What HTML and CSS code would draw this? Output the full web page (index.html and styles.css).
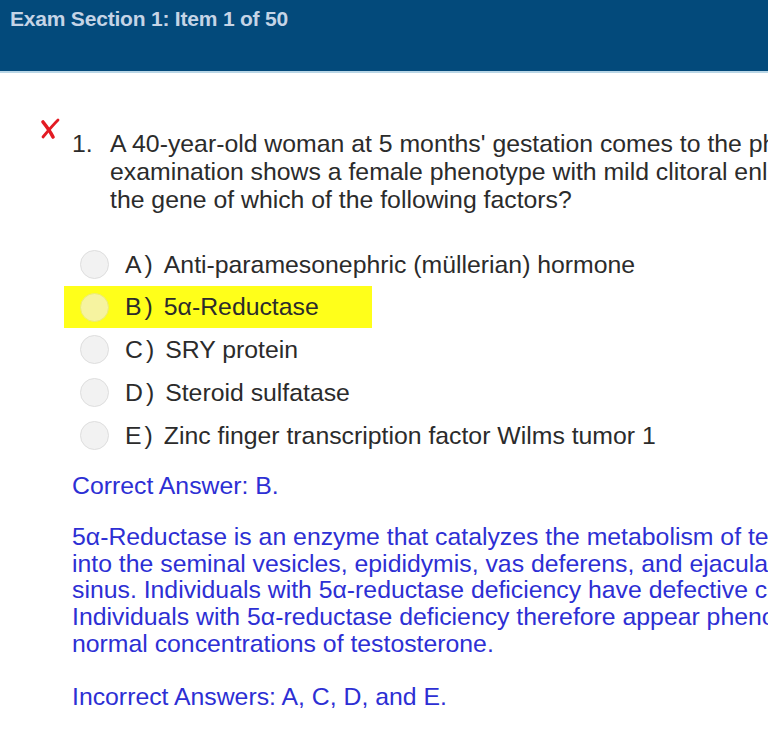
FILE: index.html
```html
<!DOCTYPE html>
<html>
<head>
<meta charset="utf-8">
<link rel="stylesheet" href="styles.css">
</head>
<body>
<header class="topbar">
  <div class="title">Exam Section 1: Item 1 of 50</div>
</header>
<main class="content">
  <div class="question">
    <svg class="mark" width="22" height="22" viewBox="0 0 22 22">
      <path d="M4 4 C8 9 11 13 14 19" stroke="#e31b23" stroke-width="3.6" fill="none" stroke-linecap="round"/>
      <path d="M19 2 C13 8 9 13 4 19" stroke="#e31b23" stroke-width="2.8" fill="none" stroke-linecap="round"/>
    </svg>
    <span class="num">1.</span>
    <div class="qtext">A 40-year-old woman at 5 months' gestation comes to the physician for a prenatal visit. Ultrasonography<br>examination shows a female phenotype with mild clitoral enlargement. A mutation in<br>the gene of which of the following factors?</div>
  </div>
  <ul class="options">
    <li class="opt"><span class="radio"></span><span class="letter">A)</span>Anti-paramesonephric (müllerian) hormone</li>
    <li class="opt sel"><span class="radio"></span><span class="letter">B)</span>5α-Reductase</li>
    <li class="opt"><span class="radio"></span><span class="letter">C)</span>SRY protein</li>
    <li class="opt"><span class="radio"></span><span class="letter">D)</span>Steroid sulfatase</li>
    <li class="opt"><span class="radio"></span><span class="letter">E)</span>Zinc finger transcription factor Wilms tumor 1</li>
  </ul>
  <div class="explain">
    <p class="correct">Correct Answer: B.</p>
    <p class="para">5α-Reductase is an enzyme that catalyzes the metabolism of testosterone to dihydrotestosterone.<br>into the seminal vesicles, epididymis, vas deferens, and ejaculatory ducts, and the urogenital<br>sinus. Individuals with 5α-reductase deficiency have defective conversion of testosterone.<br>Individuals with 5α-reductase deficiency therefore appear phenotypically female despite<br>normal concentrations of testosterone.</p>
    <p class="correct">Incorrect Answers: A, C, D, and E.</p>
  </div>
</main>
</body>
</html>
```

FILE: styles.css
```css
html, body {
  margin: 0;
  padding: 0;
  background: #ffffff;
  overflow: hidden;
  width: 768px;
  height: 731px;
}
body {
  font-family: "Liberation Sans", Arial, sans-serif;
}
.topbar {
  background: #034a7b;
  border-bottom: 2px solid #b9d6e6;
  box-sizing: border-box;
  height: 73px;
}
.title {
  color: #c5d4e6;
  font-weight: bold;
  font-size: 21px;
  padding: 7px 0 0 10px;
  letter-spacing: -0.2px;
}
.content {
  padding-left: 72px;
}
.question {
  position: relative;
  display: flex;
  margin-top: 57px;
  font-size: 24.8px;
  line-height: 28px;
  color: #2b2b2b;
  white-space: nowrap;
}
.mark {
  position: absolute;
  left: -33px;
  top: -12px;
}
.num {
  width: 38px;
  flex: none;
}
.options {
  list-style: none;
  margin: 29px 0 0 0;
  padding: 0;
}
.opt {
  display: flex;
  align-items: center;
  height: 43px;
  font-size: 24.8px;
  color: #2b2b2b;
  white-space: nowrap;
  margin-left: -8px;
  padding-left: 16px;
  width: 292px;
}
.opt.sel {
  background: #ffff1a;
  height: 42px;
}
.radio {
  width: 27px;
  height: 27px;
  border-radius: 50%;
  border: 1px solid #dedede;
  background: #f2f2f2;
  flex: none;
  margin-right: 16px;
}
.sel .radio {
  background: #f6f3a0;
  border-color: #ecec70;
}
.letter {
  margin-right: 8px;
  letter-spacing: 3px;
}
.explain {
  color: #2d2fd4;
  font-size: 24.8px;
  white-space: nowrap;
}
.explain p {
  margin: 0;
}
.correct {
  line-height: 26px;
  margin-top: 16px !important;
}
.para {
  line-height: 26.7px;
  margin-top: 25px !important;
  margin-bottom: 26px !important;
}
```
